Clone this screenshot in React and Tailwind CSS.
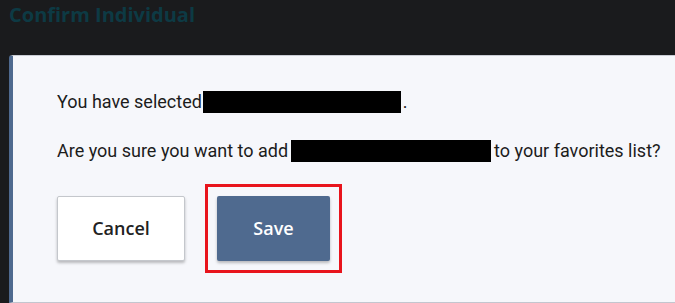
export default function App() {
  return (
    <div className="w-[675px] h-[303px] bg-[#1a1b1d] overflow-hidden flex flex-col">
      <h2 className="h-[55px] pl-[9px] pt-[2px] text-[20px] leading-[26px] font-bold text-[#0d3a44] font-['Open_Sans',sans-serif]">
        Confirm Individual
      </h2>
      <div className="ml-[9px] flex-1 bg-[#f6f7fb] border-l-[4px] border-[#4f6a8f] border-t border-t-[#c9ccd4] border-b border-b-[#c3c6cf] rounded-tl-[3px] pl-[44px] pt-[33px] font-['Roboto',sans-serif] text-[18px] text-[#1c1c1c]">
        <p className="h-[26px] leading-[26px] flex items-center">
          You have selected
          <span className="inline-block w-[198px] h-[22px] bg-black ml-[1px]"></span>
          <span className="ml-[2px]">.</span>
        </p>
        <p className="mt-[23px] h-[26px] leading-[26px] flex items-center">
          Are you sure you want to add
          <span className="inline-block w-[200px] h-[22px] bg-black ml-[3px] mr-[3px]"></span>
          to your favorites list?
        </p>
        <div className="mt-[20px] flex items-center font-['Open_Sans',sans-serif]">
          <button className="w-[128px] h-[65px] bg-white border border-[#c4c7cc] rounded-[2px] shadow-[0_2px_3px_rgba(0,0,0,0.25)] text-[18px] font-semibold text-[#222]">
            Cancel
          </button>
          <div className="ml-[20px] border-[3px] border-[#e8141c] p-[9px]">
            <button className="w-[113px] h-[65px] bg-[#4f6a8f] rounded-[2px] shadow-[0_2px_3px_rgba(0,0,0,0.25)] text-[18px] font-semibold text-white">
              Save
            </button>
          </div>
        </div>
      </div>
    </div>
  );
}
